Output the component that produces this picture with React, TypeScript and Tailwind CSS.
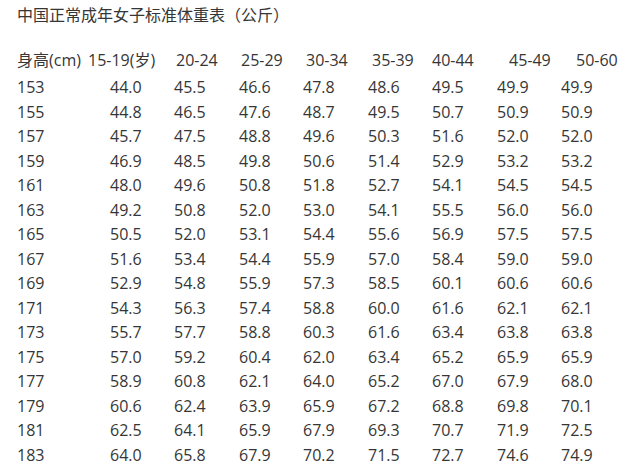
import React from "react";

const rows: [string, string[]][] = [
  ["153", ["44.0", "45.5", "46.6", "47.8", "48.6", "49.5", "49.9", "49.9"]],
  ["155", ["44.8", "46.5", "47.6", "48.7", "49.5", "50.7", "50.9", "50.9"]],
  ["157", ["45.7", "47.5", "48.8", "49.6", "50.3", "51.6", "52.0", "52.0"]],
  ["159", ["46.9", "48.5", "49.8", "50.6", "51.4", "52.9", "53.2", "53.2"]],
  ["161", ["48.0", "49.6", "50.8", "51.8", "52.7", "54.1", "54.5", "54.5"]],
  ["163", ["49.2", "50.8", "52.0", "53.0", "54.1", "55.5", "56.0", "56.0"]],
  ["165", ["50.5", "52.0", "53.1", "54.4", "55.6", "56.9", "57.5", "57.5"]],
  ["167", ["51.6", "53.4", "54.4", "55.9", "57.0", "58.4", "59.0", "59.0"]],
  ["169", ["52.9", "54.8", "55.9", "57.3", "58.5", "60.1", "60.6", "60.6"]],
  ["171", ["54.3", "56.3", "57.4", "58.8", "60.0", "61.6", "62.1", "62.1"]],
  ["173", ["55.7", "57.7", "58.8", "60.3", "61.6", "63.4", "63.8", "63.8"]],
  ["175", ["57.0", "59.2", "60.4", "62.0", "63.4", "65.2", "65.9", "65.9"]],
  ["177", ["58.9", "60.8", "62.1", "64.0", "65.2", "67.0", "67.9", "68.0"]],
  ["179", ["60.6", "62.4", "63.9", "65.9", "67.2", "68.8", "69.8", "70.1"]],
  ["181", ["62.5", "64.1", "65.9", "67.9", "69.3", "70.7", "71.9", "72.5"]],
  ["183", ["64.0", "65.8", "67.9", "70.2", "71.5", "72.7", "74.6", "74.9"]],
];

const headers = ["身高(cm)", "15-19(岁)", "20-24", "25-29", "30-34", "35-39", "40-44", "45-49", "50-60"];

export default function App() {
  return (
    <div
      className="w-[640px] h-[470px] bg-white text-[#363636] text-[16px] leading-[24.5px] pl-[17px] pt-[3px] overflow-hidden"
      style={{ fontFamily: '"Open Sans", "Noto Sans CJK SC", sans-serif' }}
    >
      <div>中国正常成年女子标准体重表（公斤）</div>
      <div className="mt-[20.5px] grid grid-cols-[71px_88px_65px_65px_66px_60px_77px_67px_60px] whitespace-nowrap">
        {headers.map((h) => (
          <div key={h}>{h}</div>
        ))}
      </div>
      <div className="mt-[2.5px]">
        {rows.map(([h, vals]) => (
          <div key={h} className="grid grid-cols-[93px_64px_65px_64px_65px_64px_65px_64px_60px]">
            <div>{h}</div>
            {vals.map((v, i) => (
              <div key={i}>{v}</div>
            ))}
          </div>
        ))}
      </div>
    </div>
  );
}
